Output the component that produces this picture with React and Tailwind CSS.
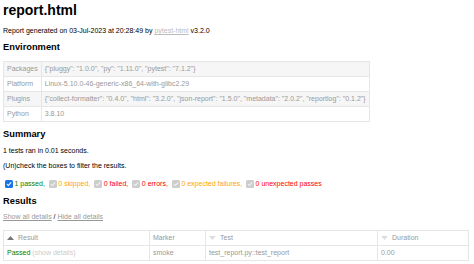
import React from 'react';

const env = [
  ['Packages', '{"pluggy": "1.0.0", "py": "1.11.0", "pytest": "7.1.2"}'],
  ['Platform', 'Linux-5.10.0-46-generic-x86_64-with-glibc2.29'],
  ['Plugins', '{"collect-formatter": "0.4.0", "html": "3.2.0", "json-report": "1.5.0", "metadata": "2.0.2", "reportlog": "0.1.2"}'],
  ['Python', '3.8.10'],
];

const filters = [
  { label: '1 passed,', color: 'text-[#008000]', on: true },
  { label: '0 skipped,', color: 'text-[#ffa500]' },
  { label: '0 failed,', color: 'text-[#ff0000]' },
  { label: '0 errors,', color: 'text-[#ff0000]' },
  { label: '0 expected failures,', color: 'text-[#ffa500]' },
  { label: '0 unexpected passes', color: 'text-[#ff0000]' },
];

function Box({ on }) {
  if (on) {
    return (
      <span className="w-[8px] h-[8px] rounded-[1.5px] bg-[#1a73e8] inline-flex items-center justify-center shrink-0">
        <svg width="6" height="6" viewBox="0 0 10 10">
          <path d="M1.5 5.2 L4 7.6 L8.6 2.4" stroke="white" strokeWidth="1.8" fill="none" />
        </svg>
      </span>
    );
  }
  return (
    <span className="w-[8px] h-[8px] rounded-[1.5px] bg-[#cdcdcd] inline-flex items-center justify-center shrink-0">
      <svg width="6" height="6" viewBox="0 0 10 10">
        <path d="M1.5 5.2 L4 7.6 L8.6 2.4" stroke="#f2f2f2" strokeWidth="1.8" fill="none" />
      </svg>
    </span>
  );
}

function Up() {
  return (
    <svg width="7" height="4" viewBox="0 0 14 8" className="mr-[4px]">
      <path d="M0 8 L7 0 L14 8 Z" fill="#777" />
    </svg>
  );
}

function Down() {
  return (
    <svg width="7" height="4" viewBox="0 0 14 8" className="mr-[4px]">
      <path d="M0 0 L7 8 L14 0 Z" fill="#ddd" />
    </svg>
  );
}

export default function App() {
  return (
    <div className="w-[474px] h-[264px] bg-white overflow-hidden pl-[3px] pr-[5px] text-black" style={{ fontFamily: '"Liberation Sans", Arial, sans-serif' }}>
      <h1 className="text-[14px] leading-[20px] font-bold">report.html</h1>
      <p className="mt-[7px] text-[7px] leading-[8px]">
        Report generated on 03-Jul-2023 at 20:28:49 by{' '}
        <span className="text-[#bbb] underline">pytest-html</span> v3.2.0
      </p>

      <h2 className="mt-[6px] text-[9.3px] leading-[12px] font-bold">Environment</h2>
      <table className="mt-[8px] w-[366px] border-collapse text-[7px] text-[#999]">
        <tbody>
          {env.map(([k, v], i) => (
            <tr key={k} className={i % 2 === 0 ? 'bg-[#f6f6f6]' : 'bg-white'}>
              <td className="border border-[#e6e6e6] px-[3px] h-[15px] leading-[8px] w-[37px] whitespace-nowrap">{k}</td>
              <td className="border border-[#e6e6e6] px-[3px] h-[15px] leading-[8px] whitespace-nowrap">{v}</td>
            </tr>
          ))}
        </tbody>
      </table>

      <h2 className="mt-[6px] text-[9.3px] leading-[12px] font-bold">Summary</h2>
      <p className="mt-[7px] text-[7px] leading-[8px]">1 tests ran in 0.01 seconds.</p>
      <p className="mt-[7px] text-[7px] leading-[8px]">(Un)check the boxes to filter the results.</p>
      <div className="mt-[9px] h-[10px] flex items-center text-[7px] leading-[8px] pl-[2px]">
        {filters.map((f) => (
          <span key={f.label} className="flex items-center mr-[4px]">
            <Box on={f.on} />
            <span className={`ml-[1.5px] ${f.color}`}>{f.label}</span>
          </span>
        ))}
      </div>

      <h2 className="mt-[6px] text-[9.3px] leading-[12px] font-bold">Results</h2>
      <p className="mt-[6px] text-[7px] leading-[8px]">
        <span className="text-[#999] underline">Show all details</span> / <span className="text-[#999] underline">Hide all details</span>
      </p>
      <table className="mt-[9px] w-[466px] border-collapse border border-[#e6e6e6] text-[7px] text-[#999]">
        <thead>
          <tr>
            <th className="border border-[#e6e6e6] h-[15px] px-[3px] text-left font-normal w-[146px]">
              <span className="flex items-center"><Up />Result</span>
            </th>
            <th className="border border-[#e6e6e6] h-[15px] px-[3px] text-left font-normal w-[56px]">Marker</th>
            <th className="border border-[#e6e6e6] h-[15px] px-[3px] text-left font-normal w-[172px]">
              <span className="flex items-center"><Down />Test</span>
            </th>
            <th className="border border-[#e6e6e6] h-[15px] px-[3px] text-left font-normal">
              <span className="flex items-center"><Down />Duration</span>
            </th>
          </tr>
        </thead>
        <tbody>
          <tr>
            <td className="border border-[#e6e6e6] h-[15px] px-[3px]">
              <span className="text-[#008000]">Passed</span> <span className="text-[#ccc]">(show details)</span>
            </td>
            <td className="border border-[#e6e6e6] h-[15px] px-[3px]">smoke</td>
            <td className="border border-[#e6e6e6] h-[15px] px-[3px]">test_report.py::test_report</td>
            <td className="border border-[#e6e6e6] h-[15px] px-[3px]">0.00</td>
          </tr>
        </tbody>
      </table>
    </div>
  );
}
